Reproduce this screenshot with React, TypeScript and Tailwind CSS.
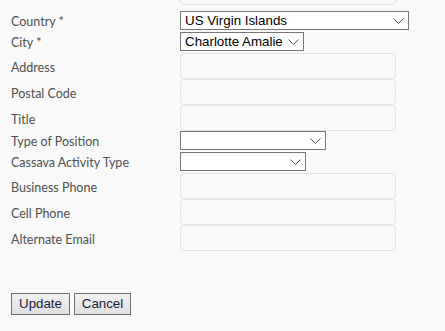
const labelCls = "w-[169px] shrink-0 translate-y-[1px] text-[12.5px] leading-[15px] text-[#505050] font-['Lato',sans-serif]"

function Chevron() {
  return (
    <svg width="11" height="6" viewBox="0 0 11 6" className="absolute right-[4px] top-1/2 -translate-y-1/2 pointer-events-none">
      <path d="M0.5 0.5 L5.5 5.5 L10.5 0.5" fill="none" stroke="#555" strokeWidth="1" />
    </svg>
  )
}

function Select({ value, width }: { value: string; width: string }) {
  return (
    <div className={`relative h-[19px] ${width} border border-[#767676] bg-white`}>
      <div className="pl-[4px] text-[13.33px] leading-[17px] text-black font-['Liberation_Sans',Arial,sans-serif] whitespace-nowrap">
        {value}
      </div>
      <Chevron />
    </div>
  )
}

function TextBox({ value }: { value?: string }) {
  return (
    <div className="h-[26px] w-[216px] rounded-[4px] border border-[#e3e3e3] bg-[#f9f9f9] pl-[9px] text-[12px] leading-[24px] text-[#777] font-['Liberation_Sans',Arial,sans-serif]">
      {value}
    </div>
  )
}

export default function App() {
  return (
    <div className="h-[331px] w-[445px] overflow-hidden bg-[#f9f9f9]">
      <div className="flex flex-col pl-[11px]">
        <div className="-mt-[21px] flex items-center">
          <div className={labelCls}>Date of Birth(mm/dd/yyyy)</div>
          <TextBox value="09/16/1979" />
        </div>
        <div className="mt-[6px] flex items-center">
          <div className={labelCls}>Country *</div>
          <Select value="US Virgin Islands" width="w-[229px]" />
        </div>
        <div className="mt-[2px] flex items-center">
          <div className={labelCls}>City *</div>
          <Select value="Charlotte Amalie" width="w-[124px]" />
        </div>
        <div className="mt-[2px] flex items-center">
          <div className={labelCls}>Address</div>
          <TextBox />
        </div>
        <div className="flex items-center">
          <div className={labelCls}>Postal Code</div>
          <TextBox />
        </div>
        <div className="flex items-center">
          <div className={labelCls}>Title</div>
          <TextBox />
        </div>
        <div className="flex items-center">
          <div className={labelCls}>Type of Position</div>
          <Select value="" width="w-[146px]" />
        </div>
        <div className="mt-[2px] flex items-center">
          <div className={labelCls}>Cassava Activity Type</div>
          <Select value="" width="w-[126px]" />
        </div>
        <div className="mt-[2px] flex items-center">
          <div className={labelCls}>Business Phone</div>
          <TextBox />
        </div>
        <div className="flex items-center">
          <div className={labelCls}>Cell Phone</div>
          <TextBox />
        </div>
        <div className="flex items-center">
          <div className={labelCls}>Alternate Email</div>
          <TextBox />
        </div>
        <div className="mt-[42px] flex gap-[4px]">
          <button className="h-[22px] w-[59px] border border-[#707070] bg-gradient-to-b from-[#f2f2f2] to-[#e0e0e0] text-[13.33px] text-[#1a1a3a] font-['Liberation_Sans',Arial,sans-serif]">
            Update
          </button>
          <button className="h-[22px] w-[57px] border border-[#707070] bg-gradient-to-b from-[#f2f2f2] to-[#e0e0e0] text-[13.33px] text-[#1a1a3a] font-['Liberation_Sans',Arial,sans-serif]">
            Cancel
          </button>
        </div>
      </div>
    </div>
  )
}
